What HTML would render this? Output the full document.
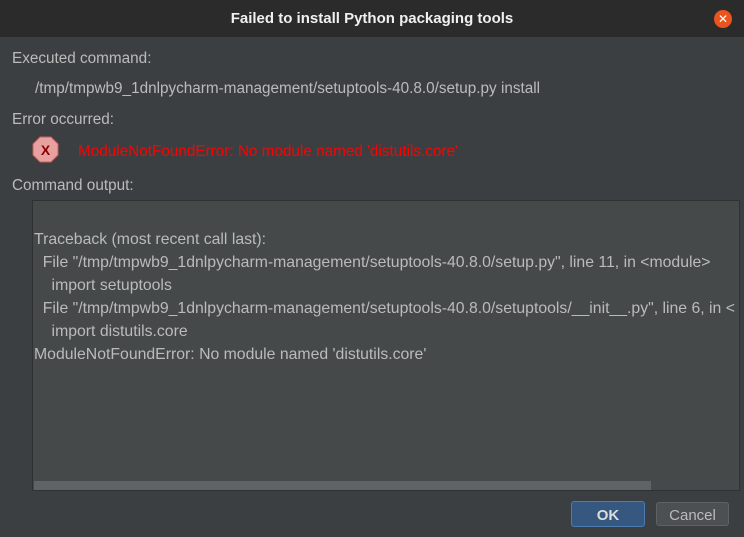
<!DOCTYPE html>
<html><head><meta charset="utf-8"><style>
*{margin:0;padding:0;box-sizing:border-box}
body{width:744px;height:537px;background:#3c3f41;font-family:"Liberation Sans",sans-serif;color:#bbbbbb;position:relative;overflow:hidden;font-size:15.3px}
.t{position:absolute;white-space:nowrap}
#title{position:absolute;left:0;top:0;width:744px;height:37px;background:#2b2b2b;color:#f0f0f0;font-weight:bold;font-size:15px;text-align:center;line-height:38px}
#close{position:absolute;left:714px;top:10px;width:18px;height:18px;border-radius:50%;background:#e9541f;color:#fff;font-size:12px;text-align:center;line-height:18px}
#out{position:absolute;left:32px;top:200px;width:708px;height:291px;background:#45494a;border:1px solid #2f3233;overflow:hidden}
#sb{position:absolute;left:1px;top:280px;width:617px;height:9px;background:#5f6364}
.b{position:absolute;border-radius:3px;text-align:center;font-size:15px}
</style></head><body>
<div id="title">Failed to install Python packaging tools</div>
<div id="close">✕</div>
<div class="t" style="left:12px;top:50px">Executed command:</div>
<div class="t" style="left:35px;top:80px">/tmp/tmpwb9_1dnlpycharm-management/setuptools-40.8.0/setup.py install</div>
<div class="t" style="left:12px;top:111px">Error occurred:</div>
<svg style="position:absolute;left:32px;top:136px" width="28" height="28" viewBox="0 0 28 28"><polygon points="8,1 19,1 26,8 26,19 19,26 8,26 1,19 1,8" fill="#e8a0a0" stroke="#c06060"/><text x="13.5" y="19" text-anchor="middle" font-family="Liberation Sans" font-weight="bold" font-size="14" fill="#8b0000">X</text></svg>
<div class="t" style="left:78px;top:143px;color:#ff0000;font-size:15.3px">ModuleNotFoundError: No module named 'distutils.core'</div>
<div class="t" style="left:12px;top:177px">Command output:</div>
<div id="out">
<div class="t" style="left:1px;top:27px;line-height:23px;font-size:15.8px">Traceback (most recent call last):<br>&nbsp;&nbsp;File "/tmp/tmpwb9_1dnlpycharm-management/setuptools-40.8.0/setup.py", line 11, in &lt;module&gt;<br>&nbsp;&nbsp;&nbsp;&nbsp;import setuptools<br>&nbsp;&nbsp;File "/tmp/tmpwb9_1dnlpycharm-management/setuptools-40.8.0/setuptools/__init__.py", line 6, in &lt;<br>&nbsp;&nbsp;&nbsp;&nbsp;import distutils.core<br>ModuleNotFoundError: No module named 'distutils.core'</div>
<div id="sb"></div>
</div>
<div class="b" style="left:571px;top:501px;width:74px;height:26px;background:#365880;border:1px solid #4c7bb0;color:#dcdcdc;font-weight:bold;line-height:27px">OK</div>
<div class="b" style="left:656px;top:502px;width:73px;height:24px;background:#4c5052;border:1px solid #5e6263;line-height:26px">Cancel</div>
</body></html>
